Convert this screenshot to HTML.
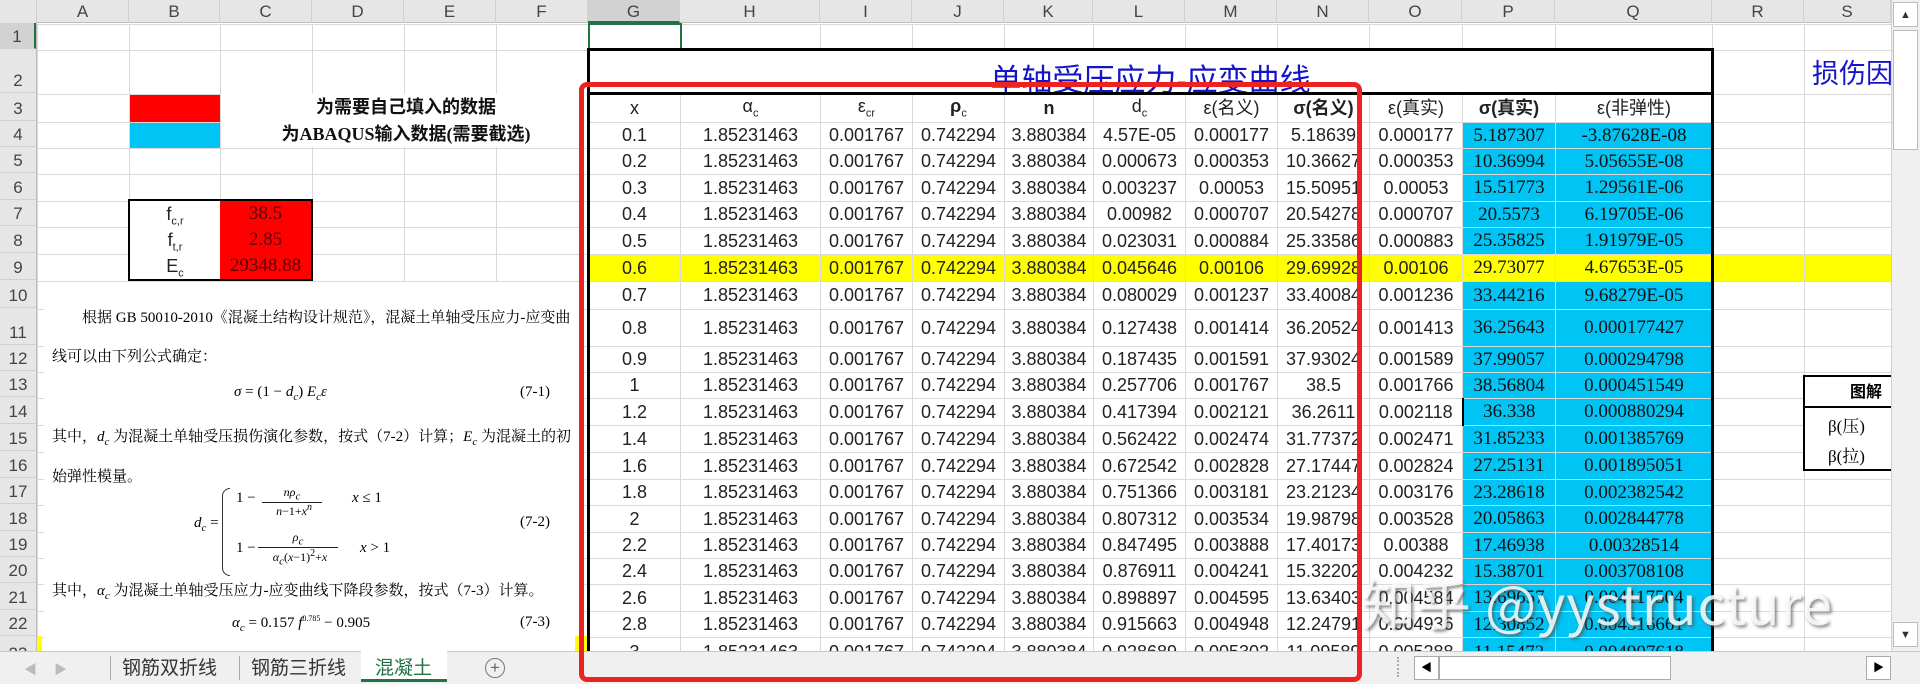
<!DOCTYPE html>
<html><head><meta charset="utf-8"><style>
*{margin:0;padding:0;box-sizing:border-box}
body{width:1920px;height:684px;overflow:hidden;background:#fff;position:relative;font-family:"Liberation Sans","Noto Sans CJK SC",sans-serif}
.abs{position:absolute}
#colh{left:0;top:0;width:1891px;height:23px;background:#e6e6e6;border-bottom:1px solid #bdbdbd}
#colh div{position:absolute;top:0;height:23px;line-height:23px;text-align:center;font-size:17px;color:#444;border-right:1px solid #cfcfcf}
#rowh{left:0;top:23px;width:37px;height:628px;background:#e6e6e6;border-right:1px solid #bdbdbd}
#rowh div{position:absolute;left:0;width:36px;text-align:center;font-size:17px;color:#444;border-bottom:1px solid #cfcfcf;display:flex;align-items:flex-end;justify-content:center;padding-bottom:1px}
table{position:absolute;left:37px;top:23px;border-collapse:collapse;table-layout:fixed;width:1854px}
td{border:1px solid #d9d9d9;text-align:center;font-size:18px;color:#222;white-space:nowrap;overflow:visible;padding:0;line-height:1}
td.p{background:#00c4f4;font-family:"Liberation Serif",serif;font-size:19px;color:#111}
tr.y td{background:#ffff00}
tr.y td.p{background:#ffff00}
.h td{font-size:18px}
.cn{font-family:"Liberation Sans","Noto Sans CJK SC",sans-serif}
sub{font-size:11px}
.doc{font-family:"Liberation Serif","Noto Serif CJK SC",serif;font-size:15px;color:#000;position:absolute;white-space:nowrap}
.f{font-family:"Liberation Serif",serif;font-style:italic}
</style></head><body>

<div id="colh" class="abs">
<div style="left:0;width:37px;background:#e6e6e6"></div>
<div style="left:37px;width:92px">A</div><div style="left:129px;width:91px">B</div><div style="left:220px;width:92px">C</div><div style="left:312px;width:92px">D</div><div style="left:404px;width:92px">E</div><div style="left:496px;width:92px">F</div><div style="left:588px;width:92px;background:#d2d2d2;border-bottom:2px solid #217346">G</div><div style="left:680px;width:140px">H</div><div style="left:820px;width:92px">I</div><div style="left:912px;width:92px">J</div><div style="left:1004px;width:89px">K</div><div style="left:1093px;width:92px">L</div><div style="left:1185px;width:92px">M</div><div style="left:1277px;width:92px">N</div><div style="left:1369px;width:93px">O</div><div style="left:1462px;width:93px">P</div><div style="left:1555px;width:157px">Q</div><div style="left:1712px;width:92px">R</div><div style="left:1804px;width:87px">S</div>
</div>
<div id="rowh" class="abs">
<div style="top:0;height:26px;background:#d2d2d2;border-right:2px solid #217346">1</div><div style="top:26px;height:44px">2</div><div style="top:70px;height:28px">3</div><div style="top:98px;height:26px">4</div><div style="top:124px;height:26px">5</div><div style="top:150px;height:27px">6</div><div style="top:177px;height:26px">7</div><div style="top:203px;height:27px">8</div><div style="top:230px;height:27px">9</div><div style="top:257px;height:28px">10</div><div style="top:285px;height:37px">11</div><div style="top:322px;height:26px">12</div><div style="top:348px;height:26px">13</div><div style="top:374px;height:27px">14</div><div style="top:401px;height:27px">15</div><div style="top:428px;height:27px">16</div><div style="top:455px;height:26px">17</div><div style="top:481px;height:27px">18</div><div style="top:508px;height:26px">19</div><div style="top:534px;height:26px">20</div><div style="top:560px;height:27px">21</div><div style="top:587px;height:26px">22</div><div style="top:613px;height:30px">23</div>
</div>

<table>
<colgroup><col style="width:92px"><col style="width:91px"><col style="width:92px"><col style="width:92px"><col style="width:92px"><col style="width:92px"><col style="width:92px"><col style="width:140px"><col style="width:92px"><col style="width:92px"><col style="width:89px"><col style="width:92px"><col style="width:92px"><col style="width:92px"><col style="width:93px"><col style="width:93px"><col style="width:157px"><col style="width:92px"><col style="width:87px"></colgroup>
<tr style="height:26px"><td></td><td></td><td></td><td></td><td></td><td></td><td style="border:2px solid #217346"></td><td></td><td></td><td></td><td></td><td></td><td></td><td></td><td></td><td></td><td></td><td></td><td></td></tr>
<tr style="height:44px"><td></td><td></td><td></td><td></td><td></td><td></td><td></td><td></td><td></td><td></td><td></td><td></td><td></td><td></td><td></td><td></td><td></td><td></td><td></td></tr>
<tr style="height:28px" class="h"><td></td><td style="background:#ff0000"></td><td></td><td></td><td></td><td></td><td>x</td><td>α<sub>c</sub></td><td>ε<sub>cr</sub></td><td><b>ρ</b><sub>c</sub></td><td><b>n</b></td><td>d<sub>c</sub></td><td class="cn">ε(名义)</td><td class="cn"><b>σ(名义)</b></td><td class="cn">ε(真实)</td><td class="cn"><b>σ(真实)</b></td><td class="cn">ε(非弹性)</td><td></td><td></td></tr>
<tr style="height:26px"><td></td><td style="background:#00c4f4"></td><td></td><td></td><td></td><td></td><td>0.1</td><td>1.85231463</td><td>0.001767</td><td>0.742294</td><td>3.880384</td><td>4.57E-05</td><td>0.000177</td><td>5.18639</td><td>0.000177</td><td class="p">5.187307</td><td class="p">-3.87628E-08</td><td></td><td></td></tr>
<tr style="height:26px"><td></td><td></td><td></td><td></td><td></td><td></td><td>0.2</td><td>1.85231463</td><td>0.001767</td><td>0.742294</td><td>3.880384</td><td>0.000673</td><td>0.000353</td><td>10.36627</td><td>0.000353</td><td class="p">10.36994</td><td class="p">5.05655E-08</td><td></td><td></td></tr>
<tr style="height:27px"><td></td><td></td><td></td><td></td><td></td><td></td><td>0.3</td><td>1.85231463</td><td>0.001767</td><td>0.742294</td><td>3.880384</td><td>0.003237</td><td>0.00053</td><td>15.50951</td><td>0.00053</td><td class="p">15.51773</td><td class="p">1.29561E-06</td><td></td><td></td></tr>
<tr style="height:26px"><td></td><td></td><td></td><td></td><td></td><td></td><td>0.4</td><td>1.85231463</td><td>0.001767</td><td>0.742294</td><td>3.880384</td><td>0.00982</td><td>0.000707</td><td>20.54278</td><td>0.000707</td><td class="p">20.5573</td><td class="p">6.19705E-06</td><td></td><td></td></tr>
<tr style="height:27px"><td></td><td></td><td></td><td></td><td></td><td></td><td>0.5</td><td>1.85231463</td><td>0.001767</td><td>0.742294</td><td>3.880384</td><td>0.023031</td><td>0.000884</td><td>25.33586</td><td>0.000883</td><td class="p">25.35825</td><td class="p">1.91979E-05</td><td></td><td></td></tr>
<tr style="height:27px" class="y"><td style="background:#fff"></td><td style="background:#fff"></td><td style="background:#fff"></td><td style="background:#fff"></td><td style="background:#fff"></td><td style="background:#fff"></td><td>0.6</td><td>1.85231463</td><td>0.001767</td><td>0.742294</td><td>3.880384</td><td>0.045646</td><td>0.00106</td><td>29.69928</td><td>0.00106</td><td class="p">29.73077</td><td class="p">4.67653E-05</td><td></td><td></td></tr>
<tr style="height:28px"><td></td><td></td><td></td><td></td><td></td><td></td><td>0.7</td><td>1.85231463</td><td>0.001767</td><td>0.742294</td><td>3.880384</td><td>0.080029</td><td>0.001237</td><td>33.40084</td><td>0.001236</td><td class="p">33.44216</td><td class="p">9.68279E-05</td><td></td><td></td></tr>
<tr style="height:37px"><td></td><td></td><td></td><td></td><td></td><td></td><td>0.8</td><td>1.85231463</td><td>0.001767</td><td>0.742294</td><td>3.880384</td><td>0.127438</td><td>0.001414</td><td>36.20524</td><td>0.001413</td><td class="p">36.25643</td><td class="p">0.000177427</td><td></td><td></td></tr>
<tr style="height:26px"><td></td><td></td><td></td><td></td><td></td><td></td><td>0.9</td><td>1.85231463</td><td>0.001767</td><td>0.742294</td><td>3.880384</td><td>0.187435</td><td>0.001591</td><td>37.93024</td><td>0.001589</td><td class="p">37.99057</td><td class="p">0.000294798</td><td></td><td></td></tr>
<tr style="height:26px"><td></td><td></td><td></td><td></td><td></td><td></td><td>1</td><td>1.85231463</td><td>0.001767</td><td>0.742294</td><td>3.880384</td><td>0.257706</td><td>0.001767</td><td>38.5</td><td>0.001766</td><td class="p">38.56804</td><td class="p">0.000451549</td><td></td><td></td></tr>
<tr style="height:27px"><td></td><td></td><td></td><td></td><td></td><td></td><td>1.2</td><td>1.85231463</td><td>0.001767</td><td>0.742294</td><td>3.880384</td><td>0.417394</td><td>0.002121</td><td>36.2611</td><td>0.002118</td><td class="p" style="border-left:2px solid #000">36.338</td><td class="p">0.000880294</td><td></td><td></td></tr>
<tr style="height:27px"><td></td><td></td><td></td><td></td><td></td><td></td><td>1.4</td><td>1.85231463</td><td>0.001767</td><td>0.742294</td><td>3.880384</td><td>0.562422</td><td>0.002474</td><td>31.77372</td><td>0.002471</td><td class="p">31.85233</td><td class="p">0.001385769</td><td></td><td></td></tr>
<tr style="height:27px"><td></td><td></td><td></td><td></td><td></td><td></td><td>1.6</td><td>1.85231463</td><td>0.001767</td><td>0.742294</td><td>3.880384</td><td>0.672542</td><td>0.002828</td><td>27.17447</td><td>0.002824</td><td class="p">27.25131</td><td class="p">0.001895051</td><td></td><td></td></tr>
<tr style="height:26px"><td></td><td></td><td></td><td></td><td></td><td></td><td>1.8</td><td>1.85231463</td><td>0.001767</td><td>0.742294</td><td>3.880384</td><td>0.751366</td><td>0.003181</td><td>23.21234</td><td>0.003176</td><td class="p">23.28618</td><td class="p">0.002382542</td><td></td><td></td></tr>
<tr style="height:27px"><td></td><td></td><td></td><td></td><td></td><td></td><td>2</td><td>1.85231463</td><td>0.001767</td><td>0.742294</td><td>3.880384</td><td>0.807312</td><td>0.003534</td><td>19.98798</td><td>0.003528</td><td class="p">20.05863</td><td class="p">0.002844778</td><td></td><td></td></tr>
<tr style="height:26px"><td></td><td></td><td></td><td></td><td></td><td></td><td>2.2</td><td>1.85231463</td><td>0.001767</td><td>0.742294</td><td>3.880384</td><td>0.847495</td><td>0.003888</td><td>17.40173</td><td>0.00388</td><td class="p">17.46938</td><td class="p">0.00328514</td><td></td><td></td></tr>
<tr style="height:26px"><td></td><td></td><td></td><td></td><td></td><td></td><td>2.4</td><td>1.85231463</td><td>0.001767</td><td>0.742294</td><td>3.880384</td><td>0.876911</td><td>0.004241</td><td>15.32202</td><td>0.004232</td><td class="p">15.38701</td><td class="p">0.003708108</td><td></td><td></td></tr>
<tr style="height:27px"><td></td><td></td><td></td><td></td><td></td><td></td><td>2.6</td><td>1.85231463</td><td>0.001767</td><td>0.742294</td><td>3.880384</td><td>0.898897</td><td>0.004595</td><td>13.63403</td><td>0.004584</td><td class="p">13.69657</td><td class="p">0.004117504</td><td></td><td></td></tr>
<tr style="height:26px"><td></td><td></td><td></td><td></td><td></td><td></td><td>2.8</td><td>1.85231463</td><td>0.001767</td><td>0.742294</td><td>3.880384</td><td>0.915663</td><td>0.004948</td><td>12.24791</td><td>0.004936</td><td class="p">12.30852</td><td class="p">0.004516661</td><td></td><td></td></tr>
<tr style="height:30px"><td></td><td></td><td></td><td></td><td></td><td></td><td>3</td><td>1.85231463</td><td>0.001767</td><td>0.742294</td><td>3.880384</td><td>0.928689</td><td>0.005302</td><td>11.09589</td><td>0.005288</td><td class="p">11.15472</td><td class="p">0.004907618</td><td></td><td></td></tr>
</table>

<div class="abs" style="left:221px;top:94px;width:366px;height:53px;background:#fff"></div>
<div class="abs" style="left:273px;top:94px;width:266px;height:27px;line-height:27px;text-align:center;font-size:18px;font-weight:bold;font-family:'Liberation Serif','Noto Sans CJK SC',serif;color:#111">为需要自己填入的数据</div>
<div class="abs" style="left:263px;top:121px;width:286px;height:27px;line-height:27px;text-align:center;font-size:18px;font-weight:bold;font-family:'Liberation Serif','Noto Sans CJK SC',serif;color:#111">为ABAQUS输入数据(需要截选)</div>

<div class="abs" style="left:128px;top:199px;width:185px;height:82px;border:2px solid #000;background:#fff"></div>
<div class="abs" style="left:220px;top:201px;width:91px;height:78px;background:#ff0000"></div>
<div class="abs" style="left:130px;top:201px;width:90px;height:26px;line-height:26px;text-align:center;font-size:18px;color:#222">f<sub>c,r</sub></div>
<div class="abs" style="left:130px;top:227px;width:90px;height:26px;line-height:26px;text-align:center;font-size:18px;color:#222">f<sub>t,r</sub></div>
<div class="abs" style="left:130px;top:253px;width:90px;height:26px;line-height:26px;text-align:center;font-size:18px;color:#222">E<sub>c</sub></div>
<div class="abs" style="left:220px;top:201px;width:91px;height:26px;line-height:26px;text-align:center;font-size:19px;font-family:'Liberation Serif',serif;color:#5a0000">38.5</div>
<div class="abs" style="left:220px;top:227px;width:91px;height:26px;line-height:26px;text-align:center;font-size:19px;font-family:'Liberation Serif',serif;color:#5a0000">2.85</div>
<div class="abs" style="left:220px;top:253px;width:91px;height:26px;line-height:26px;text-align:center;font-size:19px;font-family:'Liberation Serif',serif;color:#5a0000">29348.88</div>

<div class="abs" style="left:44px;top:282px;width:536px;height:369px;background:#fff"></div>
<div class="abs" style="left:37px;top:636px;width:5px;height:15px;background:#ffff00"></div>
<div class="abs" style="left:575px;top:636px;width:13px;height:15px;background:#ffff00"></div>
<div class="doc" style="left:82px;top:306px">根据 GB 50010-2010《混凝土结构设计规范》，混凝土单轴受压应力-应变曲</div>
<div class="doc" style="left:52px;top:345px">线可以由下列公式确定：</div>
<div class="doc" style="left:234px;top:384px"><span class="f">σ</span> = (1 − <span class="f">d<sub>c</sub></span>) <span class="f">E<sub>c</sub>ε</span></div>
<div class="doc" style="left:520px;top:384px">(7-1)</div>
<div class="doc" style="left:52px;top:425px">其中，<span class="f">d<sub>c</sub></span> 为混凝土单轴受压损伤演化参数，按式（7-2）计算；<span class="f">E<sub>c</sub></span> 为混凝土的初</div>
<div class="doc" style="left:52px;top:465px">始弹性模量。</div>
<div class="doc" style="left:194px;top:515px"><span class="f">d<sub>c</sub></span> =</div>
<div class="abs" style="left:222px;top:488px;width:8px;height:88px;border:1px solid #333;border-right:none;border-radius:8px 0 0 8px"></div>
<div class="doc" style="left:236px;top:490px">1 −</div>
<div class="doc" style="left:262px;top:485px;width:60px;text-align:center;border-bottom:1px solid #222;font-size:12px"><span class="f">nρ<sub>c</sub></span></div>
<div class="doc" style="left:262px;top:502px;width:64px;text-align:center;font-size:12px"><span class="f">n</span>−1+<span class="f">x<sup>n</sup></span></div>
<div class="doc" style="left:352px;top:490px"><span class="f">x</span> ≤ 1</div>
<div class="doc" style="left:520px;top:514px">(7-2)</div>
<div class="doc" style="left:236px;top:540px">1 −</div>
<div class="doc" style="left:258px;top:530px;width:80px;text-align:center;border-bottom:1px solid #222;font-size:12px"><span class="f">ρ<sub>c</sub></span></div>
<div class="doc" style="left:258px;top:548px;width:84px;text-align:center;font-size:12px"><span class="f">α<sub>c</sub></span>(<span class="f">x</span>−1)<sup>2</sup>+<span class="f">x</span></div>
<div class="doc" style="left:360px;top:540px"><span class="f">x</span> &gt; 1</div>
<div class="doc" style="left:52px;top:579px">其中，<span class="f">α<sub>c</sub></span> 为混凝土单轴受压应力-应变曲线下降段参数，按式（7-3）计算。</div>
<div class="doc" style="left:232px;top:614px"><span class="f">α<sub>c</sub></span> = 0.157 <span class="f">f</span><sup style="font-size:8px">0.785</sup> − 0.905</div>
<div class="doc" style="left:520px;top:614px">(7-3)</div>

<div class="abs" style="left:587px;top:48px;width:1127px;height:47px;border:3px solid #000;background:#fff;overflow:hidden">
<div style="position:absolute;left:0;right:0;top:4px;text-align:center;font-size:31px;color:#1414c8;font-family:'Liberation Sans','Noto Sans CJK SC',sans-serif">单轴受压应力-应变曲线</div>
</div>
<div class="abs" style="left:587px;top:93px;width:3px;height:558px;background:#000"></div>
<div class="abs" style="left:1711px;top:93px;width:3px;height:558px;background:#000"></div>
<div class="abs" style="left:1812px;top:52px;font-size:27px;color:#1414c8;font-family:'Noto Sans CJK SC',sans-serif;white-space:nowrap;width:79px;overflow:hidden">损伤因子</div>

<div class="abs" style="left:1803px;top:375px;width:88px;height:96px;border:2px solid #000;border-right:none;background:#fff"></div>
<div class="abs" style="left:1803px;top:406px;width:88px;height:2px;background:#000"></div>
<div class="abs" style="left:1850px;top:378px;font-size:16px;font-weight:bold;font-family:'Noto Sans CJK SC',sans-serif">图解</div>
<div class="abs" style="left:1828px;top:412px;font-size:17px;font-family:'Liberation Serif','Noto Serif CJK SC',serif">β(压)</div>
<div class="abs" style="left:1828px;top:442px;font-size:17px;font-family:'Liberation Serif','Noto Serif CJK SC',serif">β(拉)</div>

<div class="abs" style="left:1362px;top:562px;font-size:54px;color:rgba(255,255,255,0.85);text-shadow:2px 2px 3px rgba(80,80,80,0.7);font-family:'Noto Sans CJK SC',sans-serif;white-space:nowrap;letter-spacing:1px">知乎 @yystructure</div>

<div class="abs" style="left:1891px;top:0;width:29px;height:651px;background:#f0f0f0;border-left:1px solid #d0d0d0"></div>
<div class="abs" style="left:1893px;top:2px;width:25px;height:25px;background:#fff;border:1px solid #bbb;text-align:center;font-size:11px;line-height:24px;color:#333">▲</div>
<div class="abs" style="left:1893px;top:30px;width:25px;height:120px;background:#fff;border:1px solid #bbb"></div>
<div class="abs" style="left:1893px;top:622px;width:25px;height:25px;background:#fff;border:1px solid #bbb;text-align:center;font-size:11px;line-height:24px;color:#333">▼</div>

<div class="abs" style="left:0;top:651px;width:1920px;height:33px;background:#f0f0f0;border-top:1px solid #c8c8c8"></div>
<div class="abs" style="left:24px;top:659px;font-size:13px;color:#bbb">◀</div>
<div class="abs" style="left:54px;top:659px;font-size:13px;color:#bbb">▶</div>
<div class="abs" style="left:110px;top:656px;width:1px;height:24px;background:#aaa"></div>
<div class="abs" style="left:122px;top:653px;font-size:19px;color:#333;font-family:'Noto Sans CJK SC',sans-serif">钢筋双折线</div>
<div class="abs" style="left:239px;top:656px;width:1px;height:24px;background:#aaa"></div>
<div class="abs" style="left:251px;top:653px;font-size:19px;color:#333;font-family:'Noto Sans CJK SC',sans-serif">钢筋三折线</div>
<div class="abs" style="left:361px;top:651px;width:86px;height:31px;background:#fff;border-bottom:3px solid #217346"></div>
<div class="abs" style="left:375px;top:653px;font-size:19px;color:#217346;font-family:'Noto Sans CJK SC',sans-serif">混凝土</div>
<div class="abs" style="left:485px;top:658px;width:20px;height:20px;border:1px solid #777;border-radius:50%;text-align:center;line-height:18px;font-size:17px;color:#666">+</div>
<div class="abs" style="left:1397px;top:657px;width:2px;height:20px;border-left:2px dotted #aaa"></div>
<div class="abs" style="left:1414px;top:656px;width:25px;height:24px;background:#fff;border:1px solid #aaa;font-size:11px;text-align:center;line-height:22px">◀</div>
<div class="abs" style="left:1439px;top:656px;width:232px;height:24px;background:#fff;border:1px solid #aaa"></div>
<div class="abs" style="left:1866px;top:656px;width:25px;height:24px;background:#fff;border:1px solid #aaa;font-size:11px;text-align:center;line-height:22px">▶</div>

<div class="abs" style="left:579px;top:82px;width:783px;height:600px;border:5px solid #ec2320;border-radius:8px"></div>
</body></html>
